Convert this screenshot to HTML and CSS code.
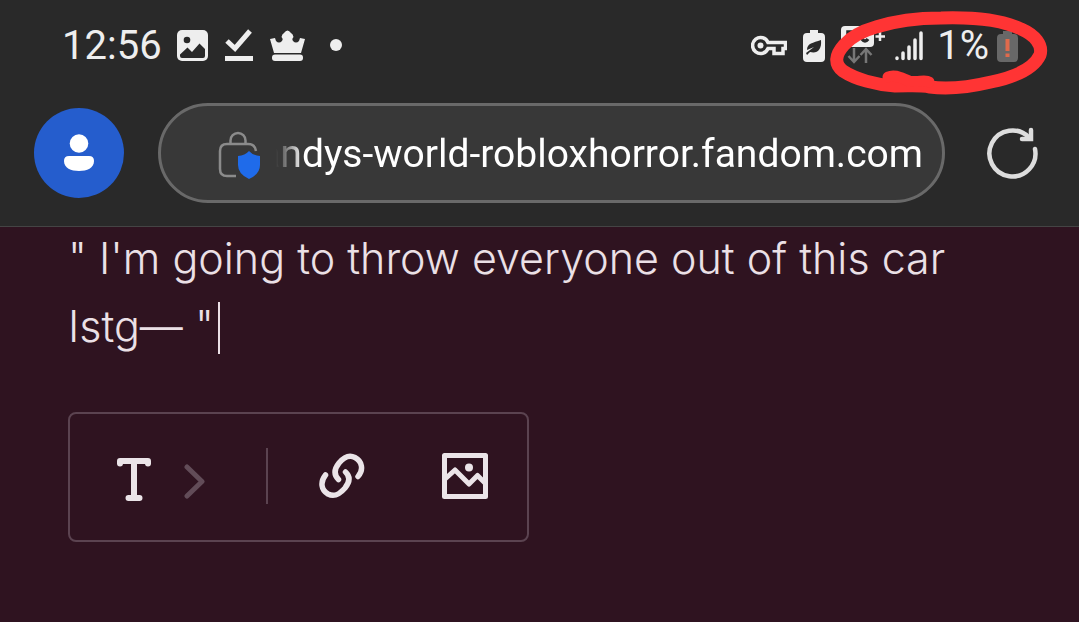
FILE: index.html
```html
<!DOCTYPE html>
<html lang="en">
<head>
<meta charset="utf-8">
<meta name="viewport" content="width=device-width, initial-scale=1">
<title>Fandom post editor</title>
<link rel="stylesheet" href="styles.css">
</head>
<body>
<header class="chrome">
  <div class="status">
    <time class="status-text">12:56</time>
    <div class="notifications">
      <svg width="31" height="32" viewBox="0 0 31 32"><rect width="31" height="31" y="0" rx="5" fill="#eee"/><circle cx="10" cy="10" r="3.3" fill="#292929"/><path d="M3 24.500L10.500 17.500L15 22L22.500 13.500L28 19V26Q28 28 26 28H5Q3 28 3 26Z" fill="#292929"/></svg>
      <svg width="28" height="33" viewBox="0 0 28 33"><path d="M2 12L10 19.500L25 2" fill="none" stroke="#eee" stroke-width="5"/><rect y="27" width="28" height="5" fill="#eee"/></svg>
      <svg width="35" height="32" viewBox="0 0 35 32" fill="#eee"><path d="M0 9L5 8L6 11Q9 14 12 11Q13.500 9 11.500 7Q12 4 14 3Q17.500-2 21 3Q23 4 23.500 7Q21.500 9 23 11Q26 14 29 11L30 8L35 9L31 23H4Z"/><rect x="2" y="24.500" width="31" height="6.500" rx="3"/></svg>
      <svg class="dot" width="12" height="32" viewBox="0 0 12 32"><circle cx="6" cy="15" r="6" fill="#eee"/></svg>
    </div>
    <div class="indicators">
      <svg class="key" width="36" height="32" viewBox="0 0 36 32"><path d="M17 12.500A8 8 0 1 0 17 18.500H23V23.500H32V18.500H34.500V12.500Z" fill="none" stroke="#eee" stroke-width="3.500"/><circle cx="9.500" cy="15.500" r="3" fill="#eee"/></svg>
      <svg class="saver" width="22" height="32" viewBox="0 0 22 32"><path d="M7 3V0H15V3H18Q22 3 22 7V28Q22 32 18 32H4Q0 32 0 28V7Q0 3 4 3Z" fill="#eee"/><path d="M18 10C19 20 14 24 7 22L4 25L3 23L11 17L4 20C4 13 10 13 18 10Z" fill="#292929"/></svg>
      <svg class="network" width="44" height="40" viewBox="0 0 44 40"><rect width="33" height="21" rx="4" fill="#eee"/><path d="M7 16V6H14M19 6H28M21 9V13Q24 17 27 13" fill="none" stroke="#292929" stroke-width="3.500"/><path d="M39 6V15M34.500 10.500H44" stroke="#eee" stroke-width="2.500"/><path d="M13 22V36M7.500 30L13 36L18.500 30M25 37V23M19.500 29L25 23L30.500 29" fill="none" stroke="#777" stroke-width="2.500"/></svg>
      <svg class="signal" width="28" height="32" viewBox="0 0 28 32"><path d="M2 28.500V28M8 28.500V23M14 28.500V17M20 28.500V10M26 28.500V3" stroke="#eee" stroke-width="3.500" stroke-linecap="round"/></svg>
      <span class="status-text">1%</span>
      <svg class="battery" width="21" height="32" viewBox="0 0 21 32"><path d="M6 4V1H15V4H17Q21 4 21 8V28Q21 32 17 32H4Q0 32 0 28V8Q0 4 4 4Z" fill="#686868"/><path d="M10.500 9V21M10.500 23.500V27" stroke="#e06a4c" stroke-width="4"/></svg>
    </div>
    <svg class="marker" width="220" height="88" viewBox="0 0 220 88"><g transform="translate(-828 -9)" fill="none" stroke="#ff3434" stroke-linecap="round" stroke-linejoin="round"><path stroke-width="13" d="M876 27C895 21 916 18 941 18C974 17 1002 20 1021 29C1035 35 1043 45 1040 55C1034 68 1015 77 991 82C974 86 950 90 930 87C919 85 913 86 895 86C876 85 855 79 843 71C834 64 835 55 844 45C851 37 862 31 876 27Z"/><path stroke-width="11" d="M888 77C895 74 901 78 909 81C918 83 925 79 929 82"/></g></svg>
  </div>
  <nav class="toolbar">
    <button class="avatar" aria-label="Profile"><svg width="30" height="38" viewBox="0 0 30 38" fill="#fff"><circle cx="15" cy="9.500" r="9.300"/><path d="M5 22H25Q30 22 30 27C30 34 23 37 15 37S0 34 0 27Q0 22 5 22Z"/></svg></button>
    <label class="address">
      <svg width="44" height="50" viewBox="0 -2 44 50"><path d="M12.500 12V9.500A7.500 7.500 0 0 1 27.500 9.500V12M18 45H9Q2 45 2 38V20Q2 13 9 13H30Q37 13 38 20" fill="none" stroke="#8b8b8b" stroke-width="2.500"/><path d="M31 20Q35 24.500 42 25V34Q42 43 31 48Q20 43 20 34V25Q27 24.500 31 20Z" fill="#1f6bea"/></svg>
      <input class="url" type="text" aria-label="Address" value="dandys-world-robloxhorror.fandom.com">
    </label>
    <button class="reload" aria-label="Reload"><svg width="52" height="54" viewBox="0 1 52 54" fill="none" stroke="#ddd" stroke-width="4.500" stroke-linecap="round"><path d="M49 24A23 23 0 1 1 43 12.500"/><path d="M45 5V14H36" stroke-linejoin="miter"/></svg></button>
  </nav>
</header>
<main class="editor">
  <div class="post" contenteditable="true" role="textbox" aria-label="Post text" spellcheck="false">" I'm going to throw everyone out of this car Istg— "<span class="caret"></span></div>
  <div class="tools" role="toolbar" aria-label="Formatting">
    <button class="tool format" aria-label="Text style"><svg width="34" height="43" viewBox="0 0 34 43" fill="none" stroke="#ebe4e8" stroke-width="6" stroke-linecap="round" stroke-linejoin="round"><path d="M3 5.500V3H31V5.500M17 3V40M11.500 40H22.500"/></svg>
    <svg class="chevron" width="21" height="35" viewBox="0 0 21 35" fill="none" stroke="#624c58" stroke-width="5" stroke-linecap="round" stroke-linejoin="round"><path d="M3 3L18 17.500L3 32"/></svg></button>
    <span class="divider"></span>
    <button class="tool link" aria-label="Link"><svg width="46" height="46" viewBox="0 0 46 46" fill="none" stroke="#ebe4e8" stroke-width="5.500" stroke-linecap="round"><path d="M19.500 26.500C14 21 16 15 20 10C25 4 30 1.500 36 4.500C43 8 45 17 39 23.500"/><path d="M26.500 19C32 24 30 30 26 35C20 42 15 44 9 41C2 37 1 29 6.500 22"/></svg></button>
    <button class="tool image" aria-label="Image"><svg width="46" height="46" viewBox="0 0 46 46" fill="none" stroke="#ebe4e8" stroke-width="5" stroke-linejoin="round"><rect x="2.500" y="2.500" width="41" height="41"/><path d="M3 26L13 17L27 31L35.500 22.500L43 30"/><circle cx="27" cy="14.500" r="4" fill="#ebe4e8" stroke="none"/></svg></button>
  </div>
</main>
</body>
</html>
```
FILE: styles.css
```css
* { box-sizing: border-box; }
body { margin: 0; min-height: 100vh; background: #2f1320; font-family: Roboto, "Liberation Sans", sans-serif; }
svg { display: block; flex: none; }
button { border: 0; padding: 0; background: none; display: flex; align-items: center; cursor: pointer; }
.chrome { position: relative; z-index: 1; background: #292929; border-bottom: 1px solid #444; padding-bottom: 23px; }
.status { position: relative; display: flex; align-items: center; justify-content: space-between; height: 91px; padding: 0 61px 0 62px; color: #eee; }
.status-text { font-size: 40px; line-height: 48px; }
.notifications { display: flex; align-items: center; gap: 17px; margin-right: auto; padding-left: 15px; }
.dot { margin-left: 8px; }
.indicators { display: flex; align-items: center; gap: 16px; }
.signal { margin-left: -6px; margin-right: -2px; }
.battery { margin-left: -8px; }
.marker { position: absolute; right: 31px; top: 9px; pointer-events: none; }
.toolbar { display: flex; align-items: center; padding: 12px 41px 0 34px; }
.avatar { width: 90px; height: 90px; border-radius: 50%; background: #255dcd; justify-content: center; flex: none; }
.address { flex: 1; min-width: 0; display: flex; align-items: center; gap: 14px; height: 100px; margin: 0 41px 0 34px; padding: 2px 19px 0 57px; border: 3px solid #696969; border-radius: 50px; background: #383838; }
.url { flex: 1; min-width: 0; height: 60px; border: 0; padding: 0; background: none; outline: 0; color: #fff; font: 39px Roboto, "Liberation Sans", sans-serif; direction: rtl; -webkit-mask-image: linear-gradient(90deg, transparent, #000 28px); mask-image: linear-gradient(90deg, transparent, #000 28px); }
.editor { padding: 0 68px; margin-top: -3px; }
.post { color: #ebe0e6; font: 300 43px/68px Inter, Roboto, sans-serif; outline: 0; }
.caret { display: inline-block; width: 2px; height: 56px; padding-bottom: 4px; margin-left: 4px; background: #ebe0e6; background-clip: content-box; vertical-align: middle; }
.tools { display: inline-flex; align-items: center; height: 130px; margin-top: 52px; padding: 0 39px 2px 47px; border: 2px solid #5b4350; border-radius: 8px; }
.format { gap: 33px; padding-top: 6px; }
.chevron { margin-top: 4px; }
.divider { width: 2px; height: 56px; margin: 0 51px 0 61px; background: #5b4350; }
.image { margin-left: 77px; }
```
